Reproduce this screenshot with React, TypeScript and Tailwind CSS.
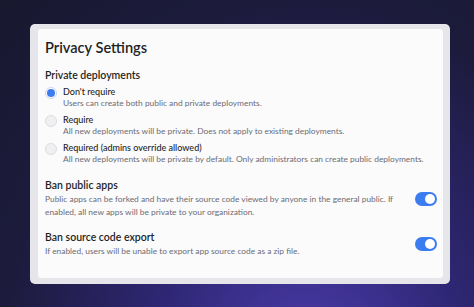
import React from 'react';

const options = [
  { label: "Don't require", desc: 'Users can create both public and private deployments.', checked: true },
  { label: 'Require', desc: 'All new deployments will be private. Does not apply to existing deployments.', checked: false },
  {
    label: 'Required (admins override allowed)',
    desc: 'All new deployments will be private by default. Only administrators can create public deployments.',
    checked: false,
  },
];

const Toggle = () => (
  <div className="w-[22px] h-[14px] rounded-full bg-[#3b7cf0] flex items-center justify-end pr-[2px] shrink-0">
    <div className="w-[10px] h-[10px] rounded-full bg-white" />
  </div>
);

export default function App() {
  return (
    <div
      className="w-[474px] h-[307px] overflow-hidden pt-[24px] pl-[30px] bg-[radial-gradient(ellipse_at_65%_120%,#4d3cae_0%,#2f2775_35%,#1c1b3c_70%,#18182f_100%)]"
      style={{ fontFamily: "Lato, 'Noto Sans', sans-serif" }}
    >
      <div className="w-[420px] h-[260px] rounded-[5px] bg-[#e6e6ea] pt-[5px] pl-[8px] pr-[7px] pb-[6px]">
        <div className="h-full rounded-[3px] bg-[#fbfbfc] pl-[7px] pr-[6px] pt-[9px] text-[#1f1f24]">
          <h1 className="text-[14.6px] leading-[20px] font-semibold">Privacy Settings</h1>

          <h2 className="mt-[10px] text-[10.5px] leading-[14px] font-semibold">Private deployments</h2>
          <div className="mt-[4px] flex flex-col gap-[6px]">
            {options.map((o) => (
              <div key={o.label} className="flex gap-[6px]">
                {o.checked ? (
                  <div className="mt-[1px] w-[12px] h-[12px] rounded-full border border-[#c9d6f0] bg-white flex items-center justify-center shrink-0">
                    <div className="w-[8px] h-[8px] rounded-full bg-[#3b7cf0]" />
                  </div>
                ) : (
                  <div className="mt-[1px] w-[12px] h-[12px] rounded-full border border-[#dcdce0] bg-[#f0f0f2] shrink-0" />
                )}
                <div>
                  <div className="text-[9px] leading-[12px] font-medium">{o.label}</div>
                  <div className="text-[8.4px] leading-[10px] text-[#6b6b74]">{o.desc}</div>
                </div>
              </div>
            ))}
          </div>

          <div className="mt-[14px] flex items-center gap-[20px]">
            <div className="flex-1">
              <h2 className="text-[10.5px] leading-[14px] font-semibold">Ban public apps</h2>
              <p className="mt-[1px] text-[8.4px] leading-[13px] text-[#6b6b74]">
                Public apps can be forked and have their source code viewed by anyone in the general public. If
                enabled, all new apps will be private to your organization.
              </p>
            </div>
            <Toggle />
          </div>

          <div className="mt-[11px] flex items-center gap-[20px]">
            <div className="flex-1">
              <h2 className="text-[10.5px] leading-[14px] font-semibold">Ban source code export</h2>
              <p className="mt-[1px] text-[8.4px] leading-[13px] text-[#6b6b74]">
                If enabled, users will be unable to export app source code as a zip file.
              </p>
            </div>
            <Toggle />
          </div>
        </div>
      </div>
    </div>
  );
}
